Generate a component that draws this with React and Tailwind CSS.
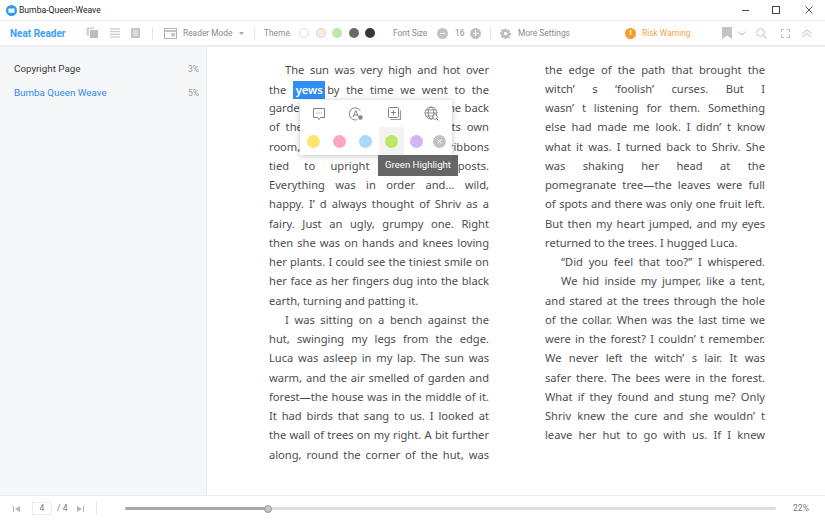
import React from "react";

const UI = { fontFamily: '"Roboto", "Liberation Sans", sans-serif' };

const left = [
  ["i", "The sun was very high and hot over"],
  ["sel"],
  ["", "garden. The hut stood close and the back"],
  ["", "of the house was a room with its own"],
  ["", "room, where she kept thin white ribbons"],
  ["", "tied to upright tall bean posts."],
  ["", "Everything was in order and… wild,"],
  ["", "happy. I’ d always thought of Shriv as a"],
  ["", "fairy. Just an ugly, grumpy one. Right"],
  ["", "then she was on hands and knees loving"],
  ["", "her plants. I could see the tiniest smile on"],
  ["", "her face as her fingers dug into the black"],
  ["l", "earth, turning and patting it."],
  ["i", "I was sitting on a bench against the"],
  ["", "hut, swinging my legs from the edge."],
  ["", "Luca was asleep in my lap. The sun was"],
  ["", "warm, and the air smelled of garden and"],
  ["", "forest—the house was in the middle of it."],
  ["", "It had birds that sang to us. I looked at"],
  ["", "the wall of trees on my right. A bit further"],
  ["", "along, round the corner of the hut, was"],
];

const right = [
  ["", "the edge of the path that brought the"],
  ["", "witch’ s ‘foolish’ curses. But I"],
  ["", "wasn’ t listening for them. Something"],
  ["", "else had made me look. I didn’ t know"],
  ["", "what it was. I turned back to Shriv. She"],
  ["", "was shaking her head at the"],
  ["", "pomegranate tree—the leaves were full"],
  ["", "of spots and there was only one fruit left."],
  ["", "But then my heart jumped, and my eyes"],
  ["l", "returned to the trees. I hugged Luca."],
  ["i", "“Did you feel that too?”  I whispered."],
  ["i", "We hid inside my jumper, like a tent,"],
  ["", "and stared at the trees through the hole"],
  ["", "of the collar. When was the last time we"],
  ["", "were in the forest? I couldn’ t remember."],
  ["", "We never left the witch’ s lair. It was"],
  ["", "safer there. The bees were in the forest."],
  ["", "What if they found and stung me? Only"],
  ["", "Shriv knew the cure and she wouldn’ t"],
  ["", "leave her hut to go with us. If I knew"],
];

function Line({ kind, text }) {
  if (kind === "sel") {
    return (
      <div className="h-[19.25px] flex items-center">
        <span>the</span>
        <span className="bg-[#2f8ef4] text-white font-semibold h-[18px] w-[32px] flex items-center justify-center ml-[7px]">yews</span>
        <span className="flex-1 flex justify-between ml-[2px]">
          <span>by</span><span>the</span><span>time</span><span>we</span><span>went</span><span>to</span><span>the</span>
        </span>
      </div>
    );
  }
  const indent = kind.includes("i");
  const last = kind.includes("l");
  return (
    <div
      className={`h-[19.25px] overflow-hidden text-justify ${indent ? "pl-[16px]" : ""} ${last ? "[text-align-last:left]" : "[text-align-last:justify]"}`}
    >
      {text}
    </div>
  );
}

function ToolIcon({ children, w = 14, h = 14, cls = "" }) {
  return (
    <svg width={w} height={h} viewBox={`0 0 ${w} ${h}`} className={cls} fill="none">
      {children}
    </svg>
  );
}

function Swatch({ c, border, ml }) {
  return <span className={`w-[10px] h-[10px] rounded-full block shrink-0 ${c} ${border || ""} ${ml}`} />;
}

function Sep({ ml }) {
  return <span className={`w-px h-[13px] shrink-0 bg-[#e3e3e3] ${ml}`} />;
}

export default function App() {
  return (
    <div className="w-[825px] h-[521px] flex flex-col bg-white overflow-hidden text-[#333]" style={UI}>
      {/* Title bar */}
      <div className="h-[20px] flex items-center shrink-0 pl-[6px] relative">
        <svg width="11" height="11" viewBox="0 0 11 11">
          <circle cx="5.5" cy="5.5" r="5.5" fill="#2f9bf0" />
          <path d="M2.5 3.5h2.6l.4.5.4-.5h2.6v4.2H6l-.5.4-.5-.4H2.5z" fill="#fff" />
        </svg>
        <span className="text-[8.6px] text-[#222] ml-[2px]">Bumba-Queen-Weave</span>
        <div className="ml-auto flex items-center text-[#333]">
          <span className="w-[7px] h-px bg-[#444] mr-[23px]" />
          <span className="w-[8px] h-[8px] border border-[#444] mr-[25px]" />
          <svg width="8" height="8" viewBox="0 0 8 8" className="mr-[12px]"><path d="M.5.5l7 7M7.500.5l-7 7" stroke="#444" strokeWidth="0.9" /></svg>
        </div>
      </div>

      {/* Toolbar */}
      <div className="h-[27px] flex items-center shrink-0 border-t border-[#efefef] border-b-2 border-b-[#ececec] text-[8.4px] text-[#8a8a8a] whitespace-nowrap">
        <span className="text-[10px] font-bold text-[#3c9cf5] ml-[10px] w-[56px]">Neat Reader</span>
        <ToolIcon w={13} h={12} cls="ml-[20px]">
          <rect x="0.5" y="0.5" width="8" height="8" fill="#d2d2d2" />
          <rect x="3.5" y="2.5" width="9" height="9" fill="#bdbdbd" stroke="#fff" />
        </ToolIcon>
        <ToolIcon w={10} h={10} cls="ml-[11px]">
          <path d="M0 1h10M0 3.700h10M0 6.300h10M0 9h10" stroke="#bdbdbd" />
        </ToolIcon>
        <ToolIcon w={9} h={10} cls="ml-[11px]">
          <rect width="9" height="10" fill="#c6c6c6" />
          <path d="M2 3h5M2 5h5M2 7h5" stroke="#f2f2f2" />
        </ToolIcon>
        <Sep ml="ml-[12px]" />
        <ToolIcon w={13} h={11} cls="ml-[11px]">
          <rect x="0.5" y="0.5" width="12" height="10" stroke="#b5b5b5" />
          <path d="M0.5 3h12" stroke="#b5b5b5" strokeWidth="1.6" />
          <path d="M7 5h4v3.500H7z" fill="#c9c9c9" />
        </ToolIcon>
        <span className="ml-[6px] w-[50px]">Reader Mode</span>
        <svg width="5" height="3" viewBox="0 0 5 3" className="ml-[6px]"><path d="M0 0h5L2.500 3z" fill="#aaa" /></svg>
        <Sep ml="ml-[10px]" />
        <span className="ml-[9px] w-[26px]">Theme</span>
        <Swatch c="bg-white" border="border border-[#dcdcdc]" ml="ml-[9px]" />
        <Swatch c="bg-[#f4efe0]" border="border border-[#d6d2c0]" ml="ml-[6.5px]" />
        <Swatch c="bg-[#bce8ad]" ml="ml-[6.5px]" />
        <Swatch c="bg-[#696969]" ml="ml-[6.5px]" />
        <Swatch c="bg-[#363b3a]" ml="ml-[6.5px]" />
        <span className="ml-[18px] w-[35px]">Font Size</span>
        <span className="ml-[9px] w-[11px] h-[11px] rounded-full bg-[#c2c2c2] flex items-center justify-center">
          <span className="w-[5px] h-px bg-white" />
        </span>
        <span className="ml-[7px] w-[9px]">16</span>
        <span className="ml-[6px] w-[11px] h-[11px] rounded-full bg-[#c2c2c2] text-white flex items-center justify-center relative">
          <span className="w-[6px] h-px bg-white" />
          <span className="w-px h-[6px] bg-white absolute" />
        </span>
        <Sep ml="ml-[9px]" />
        <svg width="11" height="11" viewBox="0 0 24 24" className="ml-[9px]">
          <path fill="#bdbdbd" fillRule="evenodd" d="M10 1h4l.6 3.200 2 .8L19.300 3l2.800 2.800-2 2.700.8 2 3.100.5v4l-3.100.6-.8 2 1.900 2.700-2.800 2.800-2.700-1.900-2 .8-.5 3h-4l-.6-3-2-.8L4.700 22l-2.800-2.800 1.900-2.700-.8-2L0 14v-4l3-.5.8-2-1.900-2.700L4.700 2l2.700 2 2-.8zM12 8a4 4 0 100 8 4 4 0 000-8z" />
        </svg>
        <span className="ml-[7px] w-[51px]">More Settings</span>
        <span className="ml-[56px] w-[11px] h-[11px] rounded-full bg-[#f99a2d] text-white text-[8px] font-bold flex items-center justify-center">!</span>
        <span className="ml-[6px] w-[48px] text-[#fba243]">Risk Warning</span>
        <svg width="10" height="12" viewBox="0 0 10 12" className="ml-[32px]"><path d="M0 0h10v12L5 8.500 0 12z" fill="#c4c4c4" /></svg>
        <svg width="8" height="5" viewBox="0 0 8 5" className="ml-[6px]"><path d="M.5.5L4 4 7.500.5" stroke="#bdbdbd" fill="none" /></svg>
        <svg width="11" height="11" viewBox="0 0 11 11" className="ml-[10px]"><circle cx="4.500" cy="4.500" r="3.800" stroke="#c4c4c4" fill="none" /><path d="M7.300 7.300L10.500 10.500" stroke="#c4c4c4" strokeWidth="1.200" /></svg>
        <svg width="9" height="9" viewBox="0 0 9 9" className="ml-[14px]"><path d="M.5 3V.5H3M6 .5h2.500V3M8.500 6v2.500H6M3 8.500H.5V6" stroke="#bcbcbd" fill="none" /></svg>
        <svg width="10" height="9" viewBox="0 0 10 9" className="ml-[12px]"><path d="M.5 4.500L5 1l4.500 3.500M.5 8L5 4.500 9.500 8" stroke="#bcbcbd" fill="none" /></svg>
      </div>

      {/* Main */}
      <div className="flex-1 flex min-h-0">
        <aside className="w-[207px] shrink-0 bg-[#f6f7f9] border-r border-[#ececec] pt-[10px] text-[9.8px]">
          <div className="h-[24px] pl-[14px] pr-[7px] flex items-center justify-between text-[#3d3d3d]">
            <span>Copyright Page</span>
            <span className="text-[8.500px] text-[#9a9a9a]">3%</span>
          </div>
          <div className="h-[24px] pl-[14px] pr-[7px] flex items-center justify-between text-[#3388ee]">
            <span>Bumba Queen Weave</span>
            <span className="text-[8.500px] text-[#9a9a9a]">5%</span>
          </div>
        </aside>

        <main
          className="flex-1 relative flex pl-[62px] pt-[14.500px] text-[11.15px] text-[#4d4d4d]"
          style={{ fontFamily: '"Noto Sans", "Open Sans", sans-serif' }}
        >
          <div className="w-[220px]">
            {left.map(([k, t], i) => <Line key={i} kind={k} text={t} />)}
          </div>
          <div className="w-[220px] ml-[56px]">
            {right.map(([k, t], i) => <Line key={i} kind={k} text={t} />)}
          </div>

          {/* Selection popup */}
          <div className="absolute left-[93px] top-[53px] w-[152px] h-[55px] bg-white shadow-[0_1px_6px_rgba(0,0,0,0.25)]" style={UI}>
            <div className="h-[27px] flex items-center pl-[12px]">
              <svg width="14" height="14" viewBox="0 0 14 14" fill="none" stroke="#666" strokeWidth="0.8">
                <path d="M1.500 1.500h11v9H8.500L7 12.500 5.500 10.500h-4z" />
                <path d="M4.500 6h.8M6.700 6h.8M8.900 6h.8" strokeWidth="1" />
              </svg>
              <svg width="15" height="14" viewBox="0 0 15 14" fill="none" stroke="#666" strokeWidth="0.8" className="ml-[23px]">
                <path d="M11.500 4A6 6 0 103.500 12.200 6 6 0 008 12.800" />
                <path d="M4 10L6.800 3.500 9.500 10M5 8h3.500" />
                <circle cx="11.500" cy="10.500" r="2.200" fill="#888" stroke="none" />
              </svg>
              <svg width="15" height="15" viewBox="0 0 15 15" fill="none" stroke="#666" strokeWidth="0.8" className="ml-[23px]">
                <rect x="1.500" y="1.500" width="10" height="10" rx="1" />
                <path d="M6.500 4v5M4 6.500h5" />
                <path d="M3.500 13.500h10v-9" stroke="#999" strokeWidth="1.200" />
              </svg>
              <svg width="15" height="15" viewBox="0 0 15 15" fill="none" stroke="#666" strokeWidth="0.7" className="ml-[22px]">
                <circle cx="7" cy="7" r="6" />
                <ellipse cx="7" cy="7" rx="2.800" ry="6" />
                <path d="M1 7h12M1.800 4h10.400M1.800 10h10.400" />
                <circle cx="11" cy="11" r="2.300" fill="#fff" />
                <path d="M12.700 12.700l1.800 1.800" strokeWidth="1" />
              </svg>
            </div>
            <div className="flex items-center h-[28px] pl-[7px] relative">
              <span className="w-[13px] h-[13px] rounded-full bg-[#fde46d]" />
              <span className="w-[13px] h-[13px] rounded-full bg-[#fca5c0] ml-[13px]" />
              <span className="w-[13px] h-[13px] rounded-full bg-[#a9d8fa] ml-[13px]" />
              <span className="w-[25px] h-[28px] bg-[#f3f3f3] flex items-center justify-center ml-[7px]">
                <span className="w-[13px] h-[13px] rounded-full bg-[#bde765] block" />
              </span>
              <span className="w-[13px] h-[13px] rounded-full bg-[#d4b2f6] ml-[6px]" />
              <span className="w-[13px] h-[13px] rounded-full bg-[#c2c2c2] ml-[10px] flex items-center justify-center">
                <svg width="7" height="7" viewBox="0 0 7 7"><path d="M1.500 1.500l4 4M5.500 1.500l-4 4" stroke="#fff" /></svg>
              </span>
            </div>
            <div className="absolute left-[78px] top-[55px] w-[80px] h-[21px] bg-[#666] text-white text-[9.6px] flex items-center justify-center whitespace-nowrap">
              Green Highlight
            </div>
          </div>
        </main>
      </div>

      {/* Footer */}
      <div className="h-[26px] shrink-0 border-t border-[#ececec] flex items-center text-[8.6px] text-[#777] whitespace-nowrap">
        <svg width="7" height="6" viewBox="0 0 7 6" className="ml-[13px]"><path d="M.5 0v6" stroke="#b5b5b5" /><path d="M7 0v6L2 3z" fill="#b5b5b5" /></svg>
        <span className="ml-[12px] w-[20px] h-[13px] border border-[#ececec] flex items-center justify-center">4</span>
        <span className="ml-[5px] w-[8px]">/ 4</span>
        <svg width="7" height="6" viewBox="0 0 7 6" className="ml-[12px]"><path d="M6.500 0v6" stroke="#b5b5b5" /><path d="M0 0v6l5-3z" fill="#b5b5b5" /></svg>
        <Sep ml="ml-[12px]" />
        <div className="ml-[28px] w-[651px] h-[3px] bg-[#dedede] relative rounded-full">
          <div className="h-full w-[143px] bg-[#a9a9a9] rounded-full" />
          <span className="absolute left-[139px] top-[-2.500px] w-[8px] h-[8px] rounded-full bg-[#c6c6c6] border border-[#9a9a9a]" />
        </div>
        <span className="ml-[17px]">22%</span>
      </div>
    </div>
  );
}
